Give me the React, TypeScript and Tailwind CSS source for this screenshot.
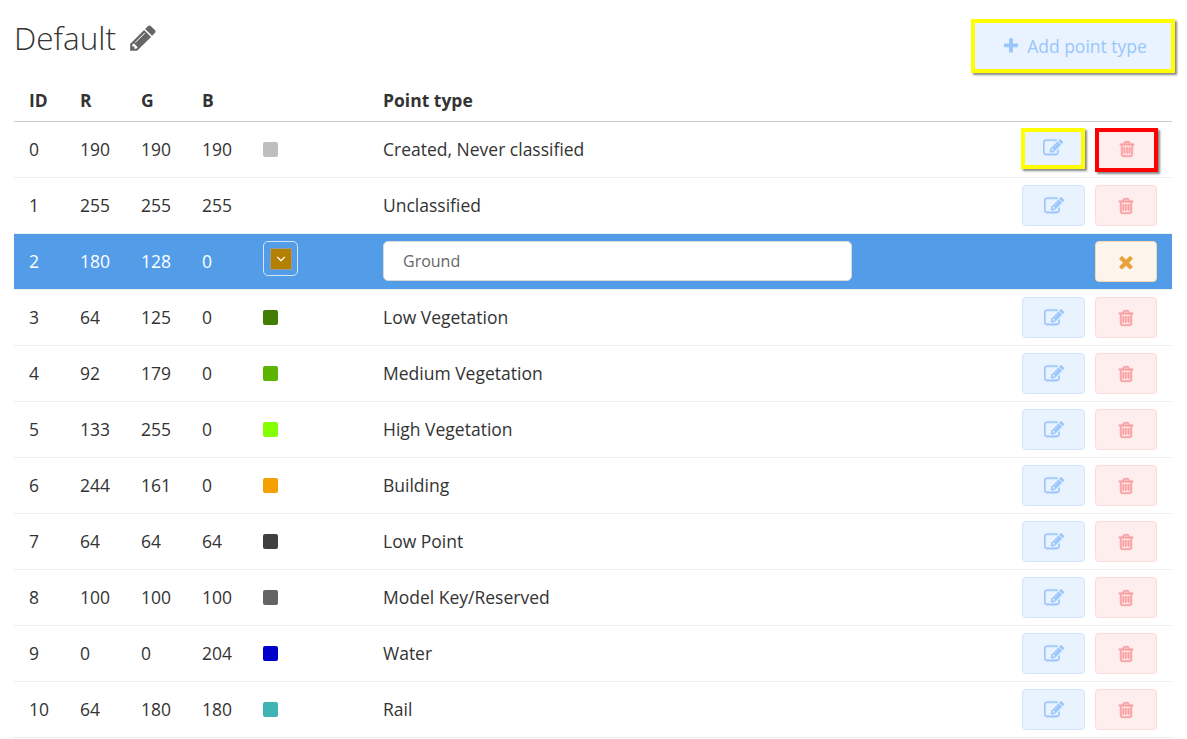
import { ChevronDown } from 'lucide-react';

const rows = [
  { id: 0, r: 190, g: 190, b: 190, color: 'bg-[#bebebe]', name: 'Created, Never classified' },
  { id: 1, r: 255, g: 255, b: 255, color: 'bg-white', name: 'Unclassified' },
  { id: 2, r: 180, g: 128, b: 0, color: 'bg-[#b48000]', name: 'Ground' },
  { id: 3, r: 64, g: 125, b: 0, color: 'bg-[#407d00]', name: 'Low Vegetation' },
  { id: 4, r: 92, g: 179, b: 0, color: 'bg-[#5cb300]', name: 'Medium Vegetation' },
  { id: 5, r: 133, g: 255, b: 0, color: 'bg-[#85ff00]', name: 'High Vegetation' },
  { id: 6, r: 244, g: 161, b: 0, color: 'bg-[#f4a100]', name: 'Building' },
  { id: 7, r: 64, g: 64, b: 64, color: 'bg-[#404040]', name: 'Low Point' },
  { id: 8, r: 100, g: 100, b: 100, color: 'bg-[#646464]', name: 'Model Key/Reserved' },
  { id: 9, r: 0, g: 0, b: 204, color: 'bg-[#0000cc]', name: 'Water' },
  { id: 10, r: 64, g: 180, b: 180, color: 'bg-[#40b4b4]', name: 'Rail' },
];

const gridCols = 'grid grid-cols-[51px_61px_61px_61px_120px_1fr_142px] items-center pl-[15px] pr-[15px]';

const icons = {
  pencil:
    'M491 1536l91-91-235-235-91 91v107h128v128h107zm523-928q0-22-22-22-10 0-17 7l-542 542q-7 7-7 17 0 22 22 22 10 0 17-7l542-542q7-7 7-17zm-54-192l416 416-832 832h-416v-416zm683 96q0 53-37 90l-166 166-416-416 166-165q36-38 90-38 53 0 91 38l235 234q37 39 37 91z',
  edit:
    'M888 1184l116-116-152-152-116 116v56h96v96h56zm440-720q-16-16-33 1l-350 350q-17 17-1 33t33-1l350-350q17-17 1-33zm80 594v190q0 119-84.5 203.5t-203.5 84.5h-832q-119 0-203.5-84.5t-84.5-203.5v-832q0-119 84.5-203.5t203.5-84.5h832q63 0 117 25 15 7 18 23 3 17-9 29l-49 49q-14 14-32 8-23-6-45-6h-832q-66 0-113 47t-47 113v832q0 66 47 113t113 47h832q66 0 113-47t47-113v-126q0-13 9-22l64-64q15-15 35-7t20 29zm-96-738l288 288-672 672h-288v-288zm444 132l-92 92-288-288 92-92q28-28 68-28t68 28l152 152q28 28 28 68t-28 68z',
  trash:
    'M704 736v576q0 14-9 23t-23 9h-64q-14 0-23-9t-9-23v-576q0-14 9-23t23-9h64q14 0 23 9t9 23zm256 0v576q0 14-9 23t-23 9h-64q-14 0-23-9t-9-23v-576q0-14 9-23t23-9h64q14 0 23 9t9 23zm256 0v576q0 14-9 23t-23 9h-64q-14 0-23-9t-9-23v-576q0-14 9-23t23-9h64q14 0 23 9t9 23zm128 724v-948h-896v948q0 22 7 40.5t14.5 27 10.5 8.5h832q3 0 10.5-8.5t14.5-27 7-40.5zm-672-1076h448l-48-117q-7-9-17-11h-317q-10 2-17 11zm928 32v64q0 14-9 23t-23 9h-96v948q0 83-47 143.5t-113 60.5h-832q-66 0-113-58.5t-47-141.5v-952h-96q-14 0-23-9t-9-23v-64q0-14 9-23t23-9h309l70-167q15-37 54-63t79-26h320q40 0 79 26t54 63l70 167h309q14 0 23 9t9 23z',
  times:
    'M1490 1322q0 40-28 68l-136 136q-28 28-68 28t-68-28l-294-294-294 294q-28 28-68 28t-68-28l-136-136q-28-28-28-68t28-68l294-294-294-294q-28-28-28-68t28-68l136-136q28-28 68-28t68 28l294 294 294-294q28-28 68-28t68 28l136 136q28 28 28 68t-28 68l-294 294 294 294q28 28 28 68z',
  plus:
    'M1600 736v192q0 40-28 68t-68 28h-416v416q0 40-28 68t-68 28h-192q-40 0-68-28t-28-68v-416h-416q-40 0-68-28t-28-68v-192q0-40 28-68t68-28h416v-416q0-40 28-68t68-28h192q40 0 68 28t28 68v416h416q40 0 68 28t28 68z',
};

function Icon({ name, className }: { name: keyof typeof icons; className: string }) {
  // trash and edit read heavier in the picture, so give them a little stroke
  const heavy = name === 'trash' || name === 'edit';
  return (
    <svg
      viewBox="0 0 1792 1792"
      fill="currentColor"
      stroke={heavy ? 'currentColor' : 'none'}
      strokeWidth={name === 'trash' ? 70 : 30}
      className={className}
    >
      <path d={icons[name]} />
    </svg>
  );
}

function RowButtons({ id }: { id: number }) {
  if (id === 2) {
    return (
      <div className="flex justify-end">
        <button type="button" className="w-[62px] h-[41px] rounded-[4px] border border-[#f5d9ae] bg-[#fdf5eb] text-[#e8a33d] flex items-center justify-center">
          <Icon name="times" className="w-[20px] h-[20px]" />
        </button>
      </div>
    );
  }
  return (
    <div className={id === 0 ? 'flex justify-end items-start gap-[10px] -mr-[1px] h-[44px]' : 'flex justify-end gap-[10px]'}>
      <button
        type="button"
        className={
          id === 0
            ? 'w-[64px] h-[41px] border-4 border-[#ffff00] bg-[#e9f2ff] text-[#99c6fb] flex items-center justify-center shadow-[2px_2px_2px_#888]'
            : 'w-[63px] h-[41px] rounded-[4px] border border-[#d3e6fd] bg-[#e9f2ff] text-[#99c6fb] flex items-center justify-center'
        }
      >
        <Icon name="edit" className="w-[20px] h-[20px]" />
      </button>
      <button
        type="button"
        className={
          id === 0
            ? 'w-[63px] h-[44px] border-4 border-[#ff0000] bg-[#ffeeee] text-[#fba0a3] flex items-center justify-center shadow-[2px_2px_2px_#888]'
            : 'w-[62px] h-[41px] rounded-[4px] border border-[#fddadb] bg-[#ffeeee] text-[#fba0a3] flex items-center justify-center'
        }
      >
        <Icon name="trash" className={id === 0 ? 'w-[18px] h-[18px] -mt-[1px]' : 'w-[18px] h-[18px]'} />
      </button>
    </div>
  );
}

export default function App() {
  return (
    <div className="w-[1187px] h-[739px] overflow-hidden bg-white text-[#333333] font-['Open_Sans',sans-serif] text-[17.5px]">
      <div className="flex justify-between items-start pl-[14px] pr-[12px] pt-[19px] h-[74px]">
        <div className="flex items-center gap-[12px] h-[38px]">
          <h1 className="text-[31.5px] font-light leading-none">Default</h1>
          <Icon name="pencil" className="w-[30px] h-[30px] text-[#666666]" />
        </div>
        <button type="button" className="w-[204px] h-[54px] border-4 border-[#ffff00] bg-[#e9f2ff] text-[#99c6fb] pl-[3px] flex items-center justify-center gap-[7px] shadow-[2px_2px_2px_#888]">
          <Icon name="plus" className="w-[18px] h-[18px]" />
          Add point type
        </button>
      </div>

      <div className="ml-[14px] w-[1158px]">
        <div className={`${gridCols} h-[48px] pt-[6px] border-b border-[#cccccc] font-bold`}>
          <span>ID</span>
          <span>R</span>
          <span>G</span>
          <span>B</span>
          <span />
          <span>Point type</span>
          <span />
        </div>

        {rows.map((row) => {
          const editing = row.id === 2;
          return (
            <div key={row.id} className="h-[56px] border-b border-[#eeeeee]">
              <div className={`${gridCols} h-[55px] ${editing ? 'bg-[#539ce8] text-white' : ''}`}>
                <span className="-mt-[1px]">{row.id}</span>
                <span className="-mt-[1px]">{row.r}</span>
                <span className="-mt-[1px]">{row.g}</span>
                <span className="-mt-[1px]">{row.b}</span>
                {editing ? (
                  <span className="w-[35px] h-[35px] mb-[6px] rounded-[5px] border border-[#d4e5f8] flex items-center justify-center">
                    <span className={`w-[22px] h-[22px] ${row.color} border border-[#999999] flex items-center justify-center text-white`}>
                      <ChevronDown className="w-[14px] h-[14px]" />
                    </span>
                  </span>
                ) : (
                  <span className={`w-[15px] h-[15px] -mt-[1px] rounded-[2px] ${row.color}`} />
                )}
                {editing ? (
                  <div className="w-[469px] h-[40px] mb-[2px] rounded-[5px] bg-white border border-[#d9d9d9] pl-[19px] flex items-center text-[#666666] text-[16px]">
                    {row.name}
                  </div>
                ) : (
                  <span className="-mt-[1px]">{row.name}</span>
                )}
                <RowButtons id={row.id} />
              </div>
            </div>
          );
        })}
      </div>
    </div>
  );
}
